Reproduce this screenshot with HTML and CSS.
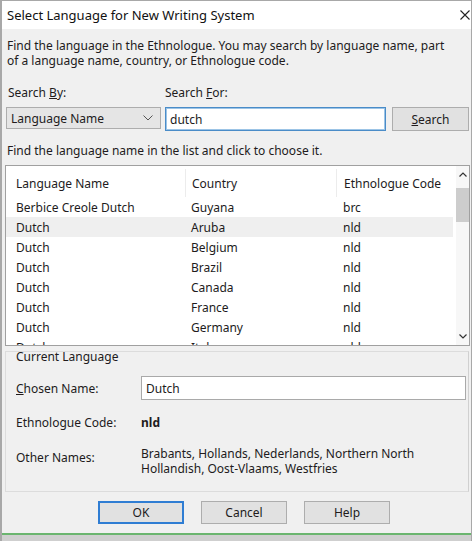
FILE: index.html
```html
<!DOCTYPE html>
<html>
<head>
<meta charset="utf-8">
<link rel="stylesheet" href="styles.css">
</head>
<body>
<div class="window">
  <div class="titlebar">
    <span class="title">Select Language for New Writing System</span>
    <svg class="close" width="10" height="10" viewBox="0 0 10 10"><path d="M0.5 0.5 L9.5 9.5 M9.5 0.5 L0.5 9.5" stroke="#222" stroke-width="1.1" fill="none"/></svg>
  </div>
  <div class="body">
    <p class="desc"><span class="line">Find the language in the Ethnologue. You may search by language name, part</span><span class="line">of a language name, country, or Ethnologue code.</span></p>
    <div class="search">
      <div class="field by">
        <div class="lbl">Search <u>B</u>y:</div>
        <div class="combo"><span>Language Name</span><svg width="10" height="6" viewBox="0 0 10 6"><path d="M0.5 0.5 L5 5 L9.5 0.5" stroke="#555" stroke-width="1" fill="none"/></svg></div>
      </div>
      <div class="field for">
        <div class="lbl">Search <u>F</u>or:</div>
        <div class="textbox focus">dutch</div>
      </div>
      <div class="btn searchbtn"><u>S</u>earch</div>
    </div>
    <p class="hint">Find the language name in the list and click to choose it.</p>
    <div class="list">
      <div class="list-main">
        <div class="row head"><span>Language Name</span><span>Country</span><span>Ethnologue Code</span></div>
        <div class="row"><span>Berbice Creole Dutch</span><span>Guyana</span><span>brc</span></div>
        <div class="row hover"><span>Dutch</span><span>Aruba</span><span>nld</span></div>
        <div class="row"><span>Dutch</span><span>Belgium</span><span>nld</span></div>
        <div class="row"><span>Dutch</span><span>Brazil</span><span>nld</span></div>
        <div class="row"><span>Dutch</span><span>Canada</span><span>nld</span></div>
        <div class="row"><span>Dutch</span><span>France</span><span>nld</span></div>
        <div class="row"><span>Dutch</span><span>Germany</span><span>nld</span></div>
        <div class="row"><span>Dutch</span><span>Italy</span><span>nld</span></div>
      </div>
      <div class="scrollbar">
        <svg class="arrow" width="8" height="5" viewBox="0 0 8 5"><path d="M0.5 4.5 L4 1 L7.5 4.5" stroke="#333" stroke-width="1.2" fill="none"/></svg>
        <div class="thumb"></div>
        <div class="track"></div>
        <svg class="arrow" width="8" height="5" viewBox="0 0 8 5"><path d="M0.5 0.5 L4 4 L7.5 0.5" stroke="#333" stroke-width="1.2" fill="none"/></svg>
      </div>
    </div>
    <div class="group">
      <div class="gtitle">Current Language</div>
      <div class="grow chosen">
        <div class="glabel"><u>C</u>hosen Name:</div>
        <div class="textbox name">Dutch</div>
      </div>
      <div class="grow code">
        <div class="glabel">Ethnologue Code:</div>
        <div class="gval bold">nld</div>
      </div>
      <div class="grow other">
        <div class="glabel pad">Other Names:</div>
        <div class="gval"><span class="line">Brabants, Hollands, Nederlands, Northern North</span><span class="line">Hollandish, Oost-Vlaams, Westfries</span></div>
      </div>
    </div>
    <div class="buttons">
      <div class="btn ok">OK</div>
      <div class="btn">Cancel</div>
      <div class="btn">Help</div>
    </div>
  </div>
  <div class="footer"></div>
</div>
</body>
</html>
```
FILE: styles.css
```css
* { box-sizing: border-box; }
html, body { margin: 0; padding: 0; background: #ffffff; }
body {
  font-family: "Noto Sans", "Open Sans", sans-serif;
  font-size: 12px;
  color: #221b1c;
}
u { text-decoration: underline; text-underline-offset: 1px; }
.line { display: block; height: 15px; line-height: 15px; overflow: visible; }
.window {
  width: 472px;
  height: 541px;
  background: #f0f0f0;
  border-top: 1px solid #a8a8a8;
  border-left: 2px solid #a8a8a8;
  border-right: 1px solid #a8a8a8;
  display: flex;
  flex-direction: column;
}
.titlebar {
  height: 28px;
  background: #ffffff;
  display: flex;
  align-items: center;
  justify-content: space-between;
  padding: 0 1px 0 5px;
}
.title { font-size: 13px; color: #111; }
.close { margin-top: 0; }
.body {
  flex: 1;
  padding: 0 0 0 3px;
  display: flex;
  flex-direction: column;
}
p { margin: 0; }
.desc {
  margin-top: 9px;
  line-height: 15px;
  padding-left: 2px;
}
.search {
  margin-top: 16px;
  display: flex;
  align-items: flex-end;
}
.field { display: flex; flex-direction: column; }
.lbl { line-height: 15px; height: 15px; padding-left: 2px; margin-bottom: 7px; margin-top: 1px; }
.field.by { width: 156px; padding-left: 1px; }
.field.for { margin-left: 4px; }
.field.for .lbl { padding-left: 0; }
.combo {
  width: 155px;
  height: 22px;
  background: #e5e5e5;
  border: 1px solid #adadad;
  display: flex;
  align-items: center;
  justify-content: space-between;
  padding: 0 7px 0 4px;
  margin-bottom: 2px;
}
.textbox {
  background: #ffffff;
  border: 1px solid #a9a9a9;
  padding-left: 4px;
  display: flex;
  align-items: center;
}
.textbox.focus {
  width: 221px;
  height: 24px;
  border: 1px solid #4a8cc8;
  box-shadow: inset 0 0 0 1px #9cc4e6;
}
.btn {
  width: 86px;
  height: 23px;
  background: #e1e1e1;
  border: 1px solid #adadad;
  display: flex;
  align-items: center;
  justify-content: center;
}
.searchbtn {
  margin-left: 6px;
  width: 77px;
  height: 24px;
}
.hint {
  margin-top: 12px;
  line-height: 15px;
  padding-left: 2px;
}
.list {
  margin-top: 7px;
  width: 465px;
  height: 181px;
  background: #ffffff;
  border: 1px solid #a0a0a0;
  display: flex;
  overflow: hidden;
}
.list-main { width: 447px; height: 179px; overflow: hidden; }
.row {
  display: grid;
  grid-template-columns: 179px 151px 1fr;
  height: 20px;
  align-items: center;
}
.row span { padding-left: 10px; white-space: nowrap; }
.row span + span { padding-left: 6px; }
.row span:last-child { padding-left: 7px; }
.row.head { height: 31px; padding-top: 3px; align-items: stretch; }
.row.head span { display: flex; align-items: center; }
.row.head span + span { border-left: 1px solid #ececec; }
.row.hover { background: #efefef; }
.scrollbar {
  margin-left: 3px;
  width: 13px;
  display: flex;
  flex-direction: column;
  align-items: center;
  background: #f7f7f7;
}
.scrollbar .arrow { margin: 6px 0; flex: none; }
.thumb { width: 13px; height: 34px; background: #cdcdcd; margin-top: 5px; flex: none; }
.track { flex: 1; }
.group {
  margin-top: 5px;
  width: 464px;
  height: 141px;
  border: 1px solid #dcdcdc;
  border-right-color: #d0d0d0;
}
.gtitle {
  margin-top: -2px;
  padding-left: 10px;
  line-height: 14px;
}
.grow { display: grid; grid-template-columns: 125px 1fr; padding-left: 10px; }
.chosen { margin-top: 12px; align-items: center; }
.textbox.name { width: 325px; height: 24px; border: 1px solid #a9a9a9; }
.code { margin-top: 15px; line-height: 15px; }
.other { margin-top: 16px; line-height: 15px; }
.glabel.pad { padding-top: 4px; }
.bold { font-weight: bold; }
.buttons {
  margin-top: 9px;
  display: flex;
  gap: 17px;
  padding-left: 93px;
}
.btn.ok { border: 1px solid #2f7dd3; box-shadow: inset 0 0 0 1px #2f7dd3; }
.footer {
  height: 8px;
  border-top: 2px solid #6bb56f;
  background: #cfcfcf;
}
```
